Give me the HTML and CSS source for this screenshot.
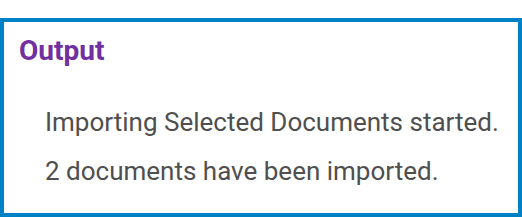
FILE: index.html
```html
<!DOCTYPE html>
<html lang="en">
	<head>
		<meta charset="UTF-8" />
		<meta name="viewport" content="width=device-width, initial-scale=1.0" />
		<title>Output</title>
		<link rel="stylesheet" href="styles.css">
	</head>
	<body>
		<div class="output-panel">
			<h2 class="output-title">Output</h2>
			<div class="output-log">
				<p class="log-line">Importing Selected Documents started.</p>
				<p class="log-line">2 documents have been imported.</p>
			</div>
		</div>
	</body>
</html>
```

FILE: styles.css
```css
body {
	margin: 0;
	padding: 0;
	background: #fff;
	font-family: Roboto, "Liberation Sans", Arial, sans-serif;
}
.output-panel {
	margin-top: 18px;
	border: 4px solid #0081c6;
	padding: 13px 14px 0 15px;
	height: 178px;
}
.output-title {
	margin: 0;
	font-size: 28px;
	line-height: 32px;
	font-weight: bold;
	color: #7030a0;
}
.output-log {
	padding-left: 26px;
	margin-top: 40px;
}
.log-line {
	margin: 0 0 19px 0;
	font-size: 26px;
	line-height: 30px;
	color: #4f4f4f;
}
```
